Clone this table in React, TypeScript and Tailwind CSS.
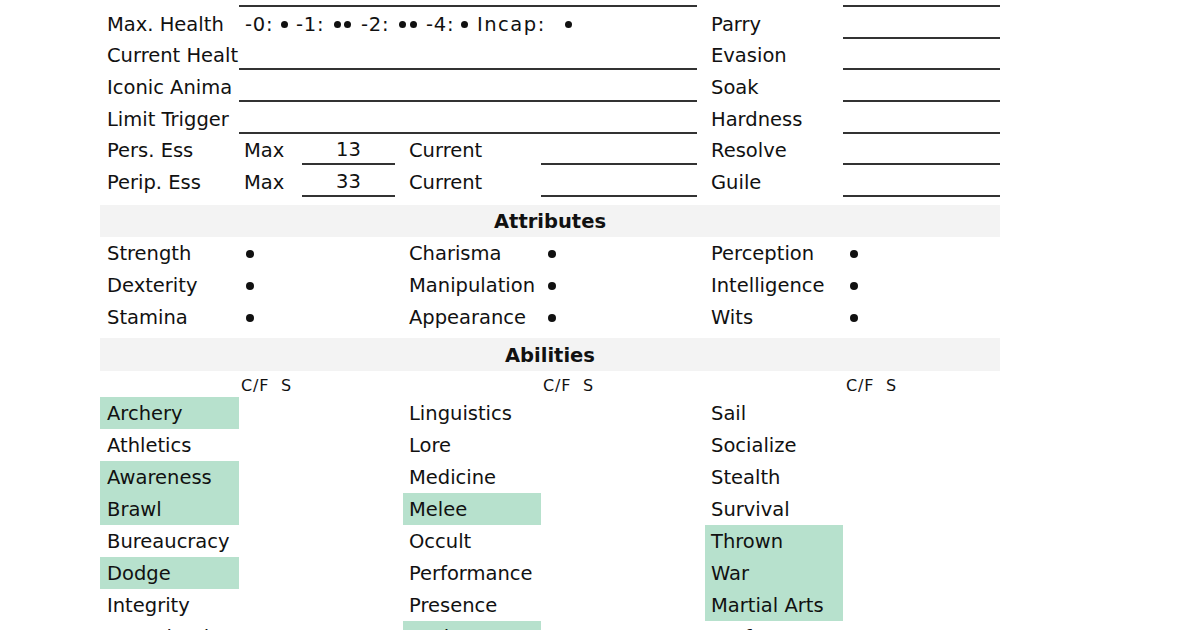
import React from 'react';

const grid =
  'grid grid-cols-[139px_63px_93px_8px_138px_156px_8px_138px_157px]';
const line = 'border-b-2 border-[#333]';
const cell = 'flex items-center whitespace-nowrap overflow-hidden pt-[3px]';

function Dot({ size = 'w-[6.7px] h-[6.7px]' }: { size?: string }) {
  return <span className={`inline-block ${size} rounded-full bg-[#111]`} />;
}

function HealthTrack() {
  return (
    <div className="flex items-center pl-[6px]">
      <span className="w-[36px] tracking-[0.8px]">-0:</span>
      <span className="w-[15px] flex"><Dot /></span>
      <span className="w-[38.4px] tracking-[0.8px]">-1:</span>
      <span className="w-[10px] flex"><Dot /></span>
      <span className="w-[16.6px] flex"><Dot /></span>
      <span className="w-[38.4px] tracking-[0.8px]">-2:</span>
      <span className="w-[10.6px] flex"><Dot /></span>
      <span className="w-[16px] flex"><Dot /></span>
      <span className="w-[35px] tracking-[0.8px]">-4:</span>
      <span className="w-[16px] flex"><Dot /></span>
      <span className="w-[88px] tracking-[1.5px]">Incap:</span>
      <span className="flex"><Dot /></span>
    </div>
  );
}

function LineRow({ label, right }: { label: string; right: string }) {
  return (
    <div className={`${grid} h-[31.67px]`}>
      <div className={`${cell} pl-[7px]`}>{label}</div>
      <div className={`col-span-5 ${line}`} />
      <div />
      <div className={`${cell} pl-[6px]`}>{right}</div>
      <div className={line} />
    </div>
  );
}

function EssenceRow({ label, max, right }: { label: string; max: string; right: string }) {
  return (
    <div className={`${grid} h-[31.67px]`}>
      <div className={`${cell} pl-[7px]`}>{label}</div>
      <div className={`${cell} pl-[5px]`}>Max</div>
      <div className={`${cell} justify-center ${line}`}>{max}</div>
      <div />
      <div className={`${cell} pl-[6px]`}>Current</div>
      <div className={line} />
      <div />
      <div className={`${cell} pl-[6px]`}>{right}</div>
      <div className={line} />
    </div>
  );
}

function Header({ title, h }: { title: string; h: string }) {
  return (
    <div className={`${h} bg-[#f3f3f3] flex items-center justify-center font-bold pt-[2px]`}>
      {title}
    </div>
  );
}

const attrs: [string, string, string][] = [
  ['Strength', 'Charisma', 'Perception'],
  ['Dexterity', 'Manipulation', 'Intelligence'],
  ['Stamina', 'Appearance', 'Wits'],
];

type Ab = { name: string; fav?: boolean };
const abilities: [Ab, Ab, Ab][] = [
  [{ name: 'Archery', fav: true }, { name: 'Linguistics' }, { name: 'Sail' }],
  [{ name: 'Athletics' }, { name: 'Lore' }, { name: 'Socialize' }],
  [{ name: 'Awareness', fav: true }, { name: 'Medicine' }, { name: 'Stealth' }],
  [{ name: 'Brawl', fav: true }, { name: 'Melee', fav: true }, { name: 'Survival' }],
  [{ name: 'Bureaucracy' }, { name: 'Occult' }, { name: 'Thrown', fav: true }],
  [{ name: 'Dodge', fav: true }, { name: 'Performance' }, { name: 'War', fav: true }],
  [{ name: 'Integrity' }, { name: 'Presence' }, { name: 'Martial Arts', fav: true }],
  [{ name: 'Investigation' }, { name: 'Resistance', fav: true }, { name: 'Craft' }],
];

function AbilityCell({ ab, pl }: { ab: Ab; pl: string }) {
  return (
    <div className={`flex items-center whitespace-nowrap overflow-hidden pt-[2px] ${pl} ${ab.fav ? 'bg-[#b7e1cd]' : ''}`}>
      {ab.name}
    </div>
  );
}

function CF({ pl }: { pl: string }) {
  return (
    <div className={`${cell} ${pl} text-[16px]`}>
      <span className="w-[40px] tracking-[0.8px]">C/F</span>
      <span>S</span>
    </div>
  );
}

export default function App() {
  return (
    <div className="w-[1200px] h-[630px] overflow-hidden bg-white text-[#111] font-['DejaVu_Sans',Verdana,sans-serif] text-[19.5px] leading-none">
      <div className="ml-[100px] w-[900px]">
        {/* top block */}
        <div className={`${grid} h-[7px]`}>
          <div />
          <div className={`col-span-5 ${line}`} />
          <div />
          <div />
          <div className={line} />
        </div>
        <div className={`${grid} h-[31.67px]`}>
          <div className={`${cell} pl-[7px]`}>Max. Health</div>
          <div className={`col-span-5 ${cell}`}>
            <HealthTrack />
          </div>
          <div />
          <div className={`${cell} pl-[6px]`}>Parry</div>
          <div className={line} />
        </div>
        <LineRow label="Current Health" right="Evasion" />
        <LineRow label="Iconic Anima" right="Soak" />
        <LineRow label="Limit Trigger" right="Hardness" />
        <EssenceRow label="Pers. Ess" max="13" right="Resolve" />
        <EssenceRow label="Perip. Ess" max="33" right="Guile" />

        <div className="h-[7.7px]" />
        <Header title="Attributes" h="h-[32px]" />
        {attrs.map(([a, b, c]) => (
          <div key={a} className={`${grid} h-[32px]`}>
            <div className={`${cell} pl-[7px]`}>{a}</div>
            <div className={`${cell} pl-[7px]`}><Dot size="w-[7.6px] h-[7.6px]" /></div>
            <div />
            <div />
            <div className={`${cell} pl-[6px]`}>{b}</div>
            <div className={`${cell} pl-[7px]`}><Dot size="w-[7.6px] h-[7.6px]" /></div>
            <div />
            <div className={`${cell} pl-[6px]`}>{c}</div>
            <div className={`${cell} pl-[7px]`}><Dot size="w-[7.6px] h-[7.6px]" /></div>
          </div>
        ))}

        <div className="h-[5.6px]" />
        <Header title="Abilities" h="h-[32.7px]" />
        <div className={`${grid} h-[26.3px]`}>
          <div />
          <CF pl="pl-[2px]" />
          <div />
          <div />
          <div />
          <CF pl="pl-[2px]" />
          <div />
          <div />
          <CF pl="pl-[3px]" />
        </div>
        {abilities.map(([a, b, c]) => (
          <div key={a.name} className={`${grid} h-[32px]`}>
            <AbilityCell ab={a} pl="pl-[7px]" />
            <div />
            <div />
            <div />
            <AbilityCell ab={b} pl="pl-[6px]" />
            <div />
            <div />
            <AbilityCell ab={c} pl="pl-[6px]" />
            <div />
          </div>
        ))}
      </div>
    </div>
  );
}
